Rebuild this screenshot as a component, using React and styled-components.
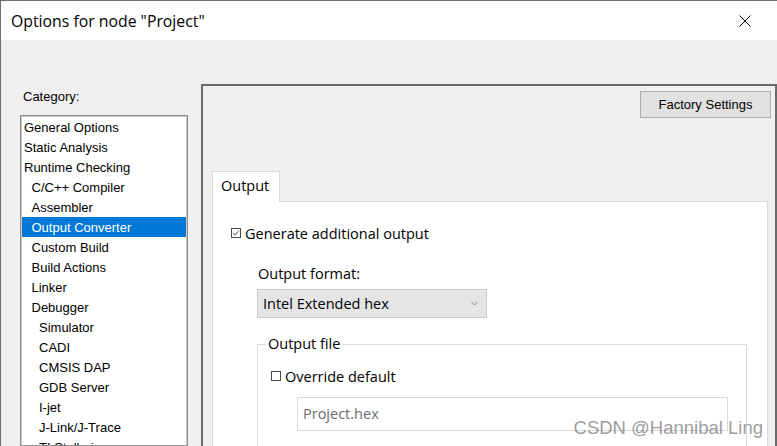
import React from "react";
import styled, { createGlobalStyle } from "styled-components";

const Global = createGlobalStyle`
  html, body { margin: 0; padding: 0; background: #f0f0f0; }
  #root { width: 777px; height: 446px; }
`;

const Window = styled.div`
  width: 777px;
  height: 446px;
  box-sizing: border-box;
  border-top: 1px solid #6e6e6e;
  border-left: 1px solid #6e6e6e;
  display: flex;
  flex-direction: column;
  overflow: hidden;
  position: relative;
  background: #f0f0f0;
`;

const TitleBar = styled.div`
  height: 39px;
  flex: none;
  background: #ffffff;
  display: flex;
  align-items: center;
  justify-content: space-between;
  padding: 1px 26px 0 10px;
  box-sizing: border-box;
  font-family: "Open Sans", "Noto Sans", sans-serif;
  font-size: 15.8px;
  color: #000;
`;

const CloseIcon = styled.svg`
  width: 12px;
  height: 12px;
  display: block;
`;

const Body = styled.div`
  flex: 1;
  display: flex;
  min-height: 0;
  overflow: hidden;
`;

const LeftCol = styled.div`
  width: 168px;
  flex: none;
  margin-left: 19px;
  padding-top: 49px;
  display: flex;
  flex-direction: column;
  font-family: "Liberation Sans", Arial, sans-serif;
  font-size: 13px;
`;

const Label = styled.div`
  height: 16px;
  line-height: 16px;
  padding-left: 3px;
  color: #000;
  margin-bottom: 10px;
`;

const List = styled.div`
  flex: 1;
  background: #fff;
  border: 1px solid #8f8f8f;
  box-shadow: inset 1px 1px 0 #c4c4c4, inset -1px 0 0 #c4c4c4;
  padding: 1px 1px 0 1px;
  overflow: hidden;
`;

const Item = styled.div`
  height: 20px;
  line-height: 22px;
  white-space: nowrap;
  padding-left: ${(p) => 2 + p.$level * 7.5}px;
  background: ${(p) => (p.$selected ? "#0078d7" : "transparent")};
  color: ${(p) => (p.$selected ? "#fff" : "#000")};
`;

const Panel = styled.div`
  flex: 1;
  margin-left: 13px;
  margin-top: 44px;
  border-top: 2px solid #6a6a6a;
  border-left: 2px solid #6a6a6a;
  border-right: 2px solid #6a6a6a;
  display: flex;
  flex-direction: column;
  font-family: "Open Sans", "Noto Sans", sans-serif;
  font-size: 14.5px;
  color: #000;
`;

const ButtonRow = styled.div`
  display: flex;
  justify-content: flex-end;
  padding: 5px 4px 0 0;
`;

const Button = styled.div`
  width: 131px;
  height: 27px;
  box-sizing: border-box;
  background: #e1e1e1;
  border: 1px solid #adadad;
  display: flex;
  align-items: center;
  justify-content: center;
  font-family: "Liberation Sans", Arial, sans-serif;
  font-size: 13px;
  color: #000;
`;

const TabStrip = styled.div`
  margin: 53px 0 0 9px;
  display: flex;
  position: relative;
  z-index: 1;
  margin-bottom: -1px;
`;

const Tab = styled.div`
  width: 68px;
  height: 31px;
  box-sizing: border-box;
  background: #fff;
  border: 1px solid #d9d9d9;
  border-bottom: none;
  padding-left: 8px;
  line-height: 28px;
`;

const TabPage = styled.div`
  margin: 0 7px 0 9px;
  min-height: 300px;
  background: #fff;
  border: 1px solid #d9d9d9;
  padding: 0 0 0 18px;
`;

const CheckRow = styled.div`
  display: flex;
  align-items: center;
  height: 20px;
  gap: 4px;
  margin-top: ${(p) => p.$top}px;
  margin-left: ${(p) => p.$left || 0}px;
`;

const Box = styled.span`
  width: 10px;
  height: 10px;
  box-sizing: border-box;
  border: 1px solid #4a4a4a;
  display: inline-flex;
  align-items: center;
  justify-content: center;
  flex: none;
`;

const Indented = styled.div`
  padding-left: 26px;
`;

const FieldLabel = styled.div`
  height: 20px;
  line-height: 20px;
  margin: 21px 0 0 1px;
`;

const Combo = styled.div`
  margin-top: 5px;
  width: 230px;
  height: 29px;
  box-sizing: border-box;
  background: #e5e5e5;
  border: 1px solid #cccccc;
  display: flex;
  align-items: center;
  justify-content: space-between;
  padding: 0 8px 0 5px;
`;

const Chevron = styled.svg`
  width: 7px;
  height: 5px;
  display: block;
`;

const Group = styled.fieldset`
  margin: 16px 0 0 0;
  padding: 0;
  width: 490px;
  min-height: 140px;
  box-sizing: border-box;
  border: 1px solid #dcdcdc;
`;

const Legend = styled.legend`
  margin-left: 8px;
  padding: 0 2px;
  line-height: 20px;
  height: 20px;
`;

const TextInput = styled.div`
  margin: 11px 0 0 39px;
  width: 431px;
  height: 34px;
  box-sizing: border-box;
  border: 1px solid #d9d9d9;
  background: #fff;
  color: #6d6d6d;
  padding-left: 5px;
  line-height: 32px;
`;

const Watermark = styled.div`
  position: absolute;
  right: 14px;
  bottom: 8px;
  font-family: "Liberation Sans", Arial, sans-serif;
  font-size: 18.5px;
  line-height: 20px;
  color: rgba(130, 130, 130, 0.8);
`;

const items = [
  ["General Options", 0],
  ["Static Analysis", 0],
  ["Runtime Checking", 0],
  ["C/C++ Compiler", 1],
  ["Assembler", 1],
  ["Output Converter", 1, true],
  ["Custom Build", 1],
  ["Build Actions", 1],
  ["Linker", 1],
  ["Debugger", 1],
  ["Simulator", 2],
  ["CADI", 2],
  ["CMSIS DAP", 2],
  ["GDB Server", 2],
  ["I-jet", 2],
  ["J-Link/J-Trace", 2],
  ["TI Stellaris", 2],
  ["Nu-Link", 2],
  ["PE micro", 2],
];

const Check = () => (
  <svg width="8" height="8" viewBox="0 0 8 8">
    <path d="M1 4.2 L3 6.2 L7 1.6" fill="none" stroke="#555" strokeWidth="1" />
  </svg>
);

export default function App() {
  return (
    <>
      <Global />
      <Window>
        <TitleBar>
          <span>Options for node "Project"</span>
          <CloseIcon viewBox="0 0 12 12">
            <path d="M0.5 0.5 L11.5 11.5 M11.5 0.5 L0.5 11.5" stroke="#000" strokeWidth="1" />
          </CloseIcon>
        </TitleBar>
        <Body>
          <LeftCol>
            <Label>Category:</Label>
            <List>
              {items.map(([name, level, sel]) => (
                <Item key={name} $level={level} $selected={!!sel}>
                  {name}
                </Item>
              ))}
            </List>
          </LeftCol>
          <Panel>
            <ButtonRow>
              <Button>Factory Settings</Button>
            </ButtonRow>
            <TabStrip>
              <Tab>Output</Tab>
            </TabStrip>
            <TabPage>
              <CheckRow $top={21}>
                <Box>
                  <Check />
                </Box>
                <span>Generate additional output</span>
              </CheckRow>
              <Indented>
                <FieldLabel>Output format:</FieldLabel>
                <Combo>
                  <span>Intel Extended hex</span>
                  <Chevron viewBox="0 0 7 5">
                    <path d="M0.5 1 L3.5 4 L6.5 1" fill="none" stroke="#888" strokeWidth="1" />
                  </Chevron>
                </Combo>
                <Group>
                  <Legend>Output file</Legend>
                  <CheckRow $top={12} $left={13}>
                    <Box />
                    <span>Override default</span>
                  </CheckRow>
                  <TextInput>Project.hex</TextInput>
                </Group>
              </Indented>
            </TabPage>
          </Panel>
        </Body>
        <Watermark>CSDN @Hannibal Ling</Watermark>
      </Window>
    </>
  );
}
